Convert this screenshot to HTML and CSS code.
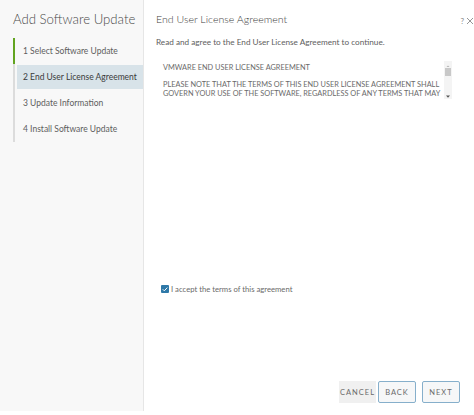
FILE: index.html
```html
<!DOCTYPE html>
<html lang="en">
<head>
<meta charset="utf-8">
<title>Add Software Update</title>
<link rel="stylesheet" href="styles.css">
</head>
<body>
<div class="dialog">
  <aside class="sidebar">
    <h1 class="title">Add Software Update</h1>
    <ol class="steps">
      <li class="step done"><span class="label">1 Select Software Update</span></li>
      <li class="step active"><span class="label">2 End User License Agreement</span></li>
      <li class="step"><span class="label">3 Update Information</span></li>
      <li class="step"><span class="label">4 Install Software Update</span></li>
    </ol>
  </aside>
  <main class="content">
    <header class="head">
      <h2 class="head-title">End User License Agreement</h2>
      <div class="head-icons"><span class="help">?</span><svg class="close" viewBox="0 0 8 8" width="8" height="8"><path d="M1 1L7 7M7 1L1 7" stroke="#8a8a8a" stroke-width="0.9" fill="none"/></svg></div>
    </header>
    <p class="intro">Read and agree to the End User License Agreement to continue.</p>
    <div class="eula">
      <div class="eula-text">
        <p class="eula-p">VMWARE END USER LICENSE AGREEMENT</p>
        <p class="eula-p">PLEASE NOTE THAT THE TERMS OF THIS END USER LICENSE AGREEMENT SHALL GOVERN YOUR USE OF THE SOFTWARE, REGARDLESS OF ANY TERMS THAT MAY</p>
      </div>
      <div class="scrollbar">
        <svg class="arrow" viewBox="0 0 8 5" width="8" height="5"><path d="M2.5 4L4 2.5L5.5 4Z" fill="#b5b5b5"/></svg>
        <div class="thumb"></div>
        <div class="track"></div>
        <svg class="arrow" viewBox="0 0 8 5" width="8" height="5"><path d="M2 1.5H6L4 3.8Z" fill="#555"/></svg>
      </div>
    </div>
    <label class="accept">
      <span class="checkbox"><svg viewBox="0 0 8 8" width="8" height="8"><path d="M1.8 4.3L3.3 5.8L6.3 2.6" stroke="#fff" stroke-width="1" fill="none"/></svg></span>
      <span class="accept-text">I accept the terms of this agreement</span>
    </label>
    <footer class="actions">
      <button class="btn btn-flat" type="button">CANCEL</button>
      <button class="btn btn-outline" type="button">BACK</button>
      <button class="btn btn-outline btn-next" type="button">NEXT</button>
    </footer>
  </main>
</div>
</body>
</html>
```
FILE: styles.css
```css
* { box-sizing: border-box; }
html, body { margin: 0; padding: 0; background: #fff; }
body {
  font-family: "Lato", "Liberation Sans", sans-serif;
  color: #5e5e5e;
  width: 474px;
  height: 415px;
  overflow: hidden;
}
.dialog {
  display: flex;
  height: 411px;
  width: 474px;
}
.sidebar {
  width: 144px;
  flex: none;
  background: #f8f8f8;
  border-right: 1px solid #e6e6e6;
  padding: 0 0 0 13px;
}
.title {
  margin: 0;
  padding-top: 10px;
  height: 38px;
  font-size: 13.2px;
  font-weight: 300;
  color: #4a4a4a;
  line-height: 18px;
  white-space: nowrap;
}
.steps {
  list-style: none;
  margin: 0;
  padding: 0;
}
.step {
  height: 26px;
  border-left: 2px solid #dcdcdc;
  padding: 1px 0 1px 2px;
}
.step.done { border-left-color: #62a420; }
.label {
  display: block;
  height: 24px;
  line-height: 24px;
  padding-left: 6px;
  font-size: 8.5px;
  color: #5e5e5e;
  white-space: nowrap;
}
.step.active .label { background: #d8e3e9; color: #3a3a3a; }
.content {
  flex: 1;
  display: flex;
  flex-direction: column;
  padding: 0 8px 8px 12px;
  min-width: 0;
}
.head {
  display: flex;
  align-items: center;
  justify-content: space-between;
  height: 36px;
  padding-top: 1px;
}
.head-title {
  margin: 0;
  font-size: 10.6px;
  font-weight: 300;
  color: #3e3e3e;
}
.head-icons {
  display: flex;
  align-items: center;
  gap: 2px;
  padding-top: 4px;
  margin-right: -8px;
}
.help { font-size: 8px; color: #8a8a8a; }
.close { display: block; }
.intro {
  margin: 0;
  font-size: 8.2px;
  line-height: 12px;
  color: #5e5e5e;
}
.eula {
  display: flex;
  margin-top: 13px;
  height: 38px;
  padding-right: 14px;
}
.eula-text {
  flex: 1;
  padding: 2px 0 0 7px;
  font-size: 7.35px;
  line-height: 9px;
  color: #6a6a6a;
  overflow: hidden;
}
.eula-p { margin: 0 0 8px; }
.scrollbar {
  width: 8px;
  display: flex;
  flex-direction: column;
  align-items: center;
  background: #f4f4f4;
  padding-top: 2px;
}
.arrow { display: block; }
.thumb { width: 6px; height: 8px; background: #c8c8c8; }
.track { flex: 1; }
.accept {
  display: flex;
  align-items: center;
  gap: 2px;
  margin-top: 185px;
  padding-left: 5px;
}
.checkbox {
  width: 8px;
  height: 8px;
  background: #2f79a8;
  border-radius: 1px;
  display: block;
}
.checkbox svg { display: block; }
.accept-text { font-size: 7.7px; color: #6a6a6a; }
.actions {
  margin-top: auto;
  display: flex;
  justify-content: flex-end;
  gap: 2px;
  padding-right: 6px;
}
.btn {
  height: 22px;
  font-family: "Lato", "Liberation Sans", sans-serif;
  font-size: 7.5px;
  letter-spacing: 1px;
  color: #6a6a6a;
  padding: 0;
  cursor: pointer;
}
.btn-flat {
  width: 37px;
  background: #f0f0f0;
  border: none;
}
.btn-outline {
  width: 38px;
  background: #f6f7f8;
  border: 1px solid #86afcb;
  border-radius: 2px;
}
.btn-next { margin-left: 4px; }
```
